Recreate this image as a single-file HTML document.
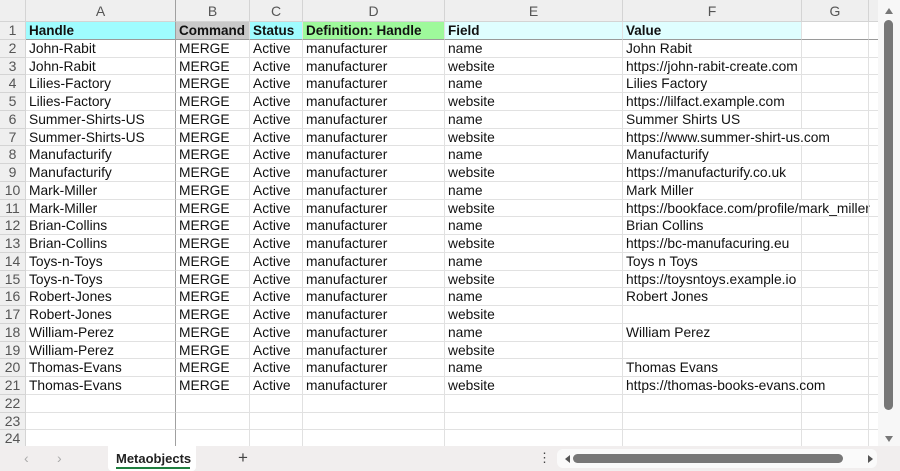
<!DOCTYPE html>
<html><head><style>
*{margin:0;padding:0;box-sizing:border-box}
body{width:900px;height:471px;overflow:hidden;background:#fff;font-family:"Liberation Sans",Arial,sans-serif;position:relative}
#g{position:absolute;left:0;top:0;display:grid;grid-template-columns:26px 150px 74px 53px 142px 178px 179px 67px 10px;grid-template-rows:22px repeat(24,17.75px);}
#g div{border-right:1px solid #e1e1e1;border-bottom:1px solid #e1e1e1;font-size:13.8px;line-height:17px;padding-left:3px;white-space:nowrap;overflow:visible;color:#111}
#g div.h{background:#efefef;color:#555;text-align:center;font-size:14px;line-height:22px;padding:0;border-color:#d4d4d4}
#g div.n{background:#efefef;color:#555;text-align:center;font-size:14px;padding:0;border-color:#d4d4d4}
#g div.b{font-weight:bold;border-bottom:1px solid #9a9a9a;font-size:13.5px}
#g div.fz{border-right:1px solid #a0a0a0}
#tabs{position:absolute;left:0;top:446px;width:900px;height:25px;background:#f1eeee}
#vs{position:absolute;left:878px;top:0;width:22px;height:446px;background:#f7f7f7}
</style></head><body>
<div id="g">
<div class="h"></div><div class="h fz">A</div><div class="h">B</div><div class="h">C</div><div class="h">D</div><div class="h">E</div><div class="h">F</div><div class="h">G</div><div class="h"></div>
<div class="n">1</div><div class="b fz" style="background:#9ffcff">Handle</div><div class="b" style="background:#c9c9c9">Command</div><div class="b" style="background:#9ffcff">Status</div><div class="b" style="background:#9ef99b">Definition: Handle</div><div class="b" style="background:#dffeff">Field</div><div class="b" style="background:#dffeff">Value</div><div class="b"></div><div class="b"></div>
<div class="n">2</div><div class="fz">John-Rabit</div><div>MERGE</div><div>Active</div><div>manufacturer</div><div>name</div><div>John Rabit</div><div></div><div></div>
<div class="n">3</div><div class="fz">John-Rabit</div><div>MERGE</div><div>Active</div><div>manufacturer</div><div>website</div><div>https://john-rabit-create.com</div><div></div><div></div>
<div class="n">4</div><div class="fz">Lilies-Factory</div><div>MERGE</div><div>Active</div><div>manufacturer</div><div>name</div><div>Lilies Factory</div><div></div><div></div>
<div class="n">5</div><div class="fz">Lilies-Factory</div><div>MERGE</div><div>Active</div><div>manufacturer</div><div>website</div><div>https://lilfact.example.com</div><div></div><div></div>
<div class="n">6</div><div class="fz">Summer-Shirts-US</div><div>MERGE</div><div>Active</div><div>manufacturer</div><div>name</div><div>Summer Shirts US</div><div></div><div></div>
<div class="n">7</div><div class="fz">Summer-Shirts-US</div><div>MERGE</div><div>Active</div><div>manufacturer</div><div>website</div><div style="border-right:none">https://www.summer-shirt-us.com</div><div></div><div></div>
<div class="n">8</div><div class="fz">Manufacturify</div><div>MERGE</div><div>Active</div><div>manufacturer</div><div>name</div><div>Manufacturify</div><div></div><div></div>
<div class="n">9</div><div class="fz">Manufacturify</div><div>MERGE</div><div>Active</div><div>manufacturer</div><div>website</div><div>https://manufacturify.co.uk</div><div></div><div></div>
<div class="n">10</div><div class="fz">Mark-Miller</div><div>MERGE</div><div>Active</div><div>manufacturer</div><div>name</div><div>Mark Miller</div><div></div><div></div>
<div class="n">11</div><div class="fz">Mark-Miller</div><div>MERGE</div><div>Active</div><div>manufacturer</div><div>website</div><div style="border-right:none">https://bookface.com/profile/mark_miller</div><div></div><div></div>
<div class="n">12</div><div class="fz">Brian-Collins</div><div>MERGE</div><div>Active</div><div>manufacturer</div><div>name</div><div>Brian Collins</div><div></div><div></div>
<div class="n">13</div><div class="fz">Brian-Collins</div><div>MERGE</div><div>Active</div><div>manufacturer</div><div>website</div><div>https://bc-manufacuring.eu</div><div></div><div></div>
<div class="n">14</div><div class="fz">Toys-n-Toys</div><div>MERGE</div><div>Active</div><div>manufacturer</div><div>name</div><div>Toys n Toys</div><div></div><div></div>
<div class="n">15</div><div class="fz">Toys-n-Toys</div><div>MERGE</div><div>Active</div><div>manufacturer</div><div>website</div><div>https://toysntoys.example.io</div><div></div><div></div>
<div class="n">16</div><div class="fz">Robert-Jones</div><div>MERGE</div><div>Active</div><div>manufacturer</div><div>name</div><div>Robert Jones</div><div></div><div></div>
<div class="n">17</div><div class="fz">Robert-Jones</div><div>MERGE</div><div>Active</div><div>manufacturer</div><div>website</div><div></div><div></div><div></div>
<div class="n">18</div><div class="fz">William-Perez</div><div>MERGE</div><div>Active</div><div>manufacturer</div><div>name</div><div>William Perez</div><div></div><div></div>
<div class="n">19</div><div class="fz">William-Perez</div><div>MERGE</div><div>Active</div><div>manufacturer</div><div>website</div><div></div><div></div><div></div>
<div class="n">20</div><div class="fz">Thomas-Evans</div><div>MERGE</div><div>Active</div><div>manufacturer</div><div>name</div><div>Thomas Evans</div><div></div><div></div>
<div class="n">21</div><div class="fz">Thomas-Evans</div><div>MERGE</div><div>Active</div><div>manufacturer</div><div>website</div><div>https://thomas-books-evans.com</div><div></div><div></div>
<div class="n">22</div><div class="fz"></div><div></div><div></div><div></div><div></div><div></div><div></div><div></div>
<div class="n">23</div><div class="fz"></div><div></div><div></div><div></div><div></div><div></div><div></div><div></div>
<div class="n">24</div><div class="fz"></div><div></div><div></div><div></div><div></div><div></div><div></div><div></div>
</div>
<div id="vs">
  <div style="position:absolute;left:7px;top:8px;width:0;height:0;border-left:4px solid transparent;border-right:4px solid transparent;border-bottom:6px solid #777"></div>
  <div style="position:absolute;left:6px;top:20px;width:9px;height:390px;background:#777;border-radius:5px"></div>
  <div style="position:absolute;left:7px;top:436px;width:0;height:0;border-left:4px solid transparent;border-right:4px solid transparent;border-top:6px solid #777"></div>
</div>
<div id="tabs">
  <span style="position:absolute;left:24px;top:4px;color:#aaa;font-size:14px">&#8249;</span>
  <span style="position:absolute;left:57px;top:4px;color:#aaa;font-size:14px">&#8250;</span>
  <div style="position:absolute;left:108px;top:0;width:88px;height:25px;background:#fff;border-radius:0 0 4px 4px"></div>
  <span style="position:absolute;left:116px;top:5px;font-size:13px;font-weight:bold;color:#222">Metaobjects</span>
  <div style="position:absolute;left:116px;top:21px;width:74px;height:2px;background:#1e7e3e"></div>
  <span style="position:absolute;left:238px;top:2px;font-size:17px;color:#444">+</span>
  <span style="position:absolute;left:538px;top:4px;font-size:13px;color:#444">&#8942;</span>
  <div style="position:absolute;left:557px;top:3px;width:320px;height:19px;background:#fafafa;border-radius:6px"></div>
  <div style="position:absolute;left:565px;top:9px;width:0;height:0;border-top:4px solid transparent;border-bottom:4px solid transparent;border-right:5px solid #555"></div>
  <div style="position:absolute;left:573px;top:8px;width:270px;height:9px;background:#777;border-radius:5px"></div>
  <div style="position:absolute;left:868px;top:9px;width:0;height:0;border-top:4px solid transparent;border-bottom:4px solid transparent;border-left:5px solid #555"></div>
</div>
</body></html>
